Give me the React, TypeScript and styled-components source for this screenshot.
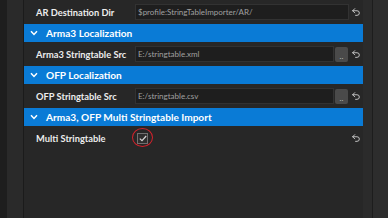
import React from 'react';
import styled, { createGlobalStyle } from 'styled-components';
import { Undo2 } from 'lucide-react';

const GlobalStyle = createGlobalStyle`
  html, body {
    margin: 0;
    padding: 0;
    background: #262626;
    font-family: Lato, "Liberation Sans", sans-serif;
  }
`;

const Root = styled.div`
  display: flex;
  height: 218px;
  width: 388px;
  overflow: hidden;
  background: #262626;
`;

const LeftGutter = styled.div`
  display: flex;
  width: 24px;
  flex-shrink: 0;
  border-right: 1px solid #1b1b1b;
  box-sizing: border-box;
`;

const GutterStrip = styled.div<{ $w: number; $bg: string }>`
  width: ${(p) => p.$w}px;
  background: ${(p) => p.$bg};
  flex-shrink: 0;
`;

const Panel = styled.div`
  display: flex;
  flex-direction: column;
  width: 339px;
  flex-shrink: 0;
  background: #272727;
`;

const RightStrip = styled.div`
  display: flex;
  flex: 1;
`;

const Row = styled.div`
  display: grid;
  grid-template-columns: 111px 1fr 12px;
  align-items: center;
  height: 24px;
  padding-right: 2px;
`;

const Label = styled.div`
  padding-left: 12px;
  font-size: 9.3px;
  font-weight: 700;
  color: #ececec;
  white-space: nowrap;
`;

const Field = styled.div`
  display: flex;
  align-items: center;
  gap: 1px;
  height: 16px;
`;

const Input = styled.div`
  flex: 1;
  height: 16px;
  box-sizing: border-box;
  background: #1e1e1e;
  border: 1px solid #323232;
  padding: 0 2px;
  font-size: 8px;
  line-height: 14px;
  color: #a0a0a0;
  white-space: nowrap;
  overflow: hidden;
`;

const BrowseButton = styled.div`
  width: 13px;
  height: 15px;
  background: #4a4a4a;
  border-radius: 2px;
  color: #bcbcbc;
  font-size: 8px;
  line-height: 18px;
  text-align: center;
  margin-right: 1px;
`;

const Reset = styled.div`
  display: flex;
  justify-content: flex-end;
  color: #cfcfcf;
`;

const Header = styled.div`
  display: flex;
  align-items: center;
  gap: 8px;
  height: 18px;
  padding-left: 6px;
  background: #0a7bd6;
  color: #ffffff;
  font-size: 10.1px;
  font-weight: 700;
  white-space: nowrap;
`;

const Chevron = styled.svg`
  width: 8px;
  height: 6px;
  flex-shrink: 0;
`;

const CheckWrap = styled.div`
  position: relative;
  width: 11px;
  height: 11px;
  margin-left: 2px;
`;

const CheckBox = styled.div`
  width: 11px;
  height: 11px;
  box-sizing: border-box;
  border: 1px solid #707070;
  background: #2e2e2e;
  display: flex;
  align-items: center;
  justify-content: center;
`;

const Annotation = styled.div`
  position: absolute;
  left: -5px;
  top: -5px;
  width: 21px;
  height: 19px;
  border: 1.5px solid #d4222c;
  border-radius: 50%;
  box-sizing: border-box;
`;

const SectionHeader: React.FC<{ title: string }> = ({ title }) => (
  <Header>
    <Chevron viewBox="0 0 8 6">
      <path d="M1 1.2 L4 4.4 L7 1.2" fill="none" stroke="#fff" strokeWidth="1.5" />
    </Chevron>
    {title}
  </Header>
);

const ResetIcon = () => (
  <Reset>
    <Undo2 size={10} strokeWidth={2.2} />
  </Reset>
);

const App: React.FC = () => {
  return (
    <Root>
      <GlobalStyle />
      <LeftGutter>
        <GutterStrip $w={7} $bg="#1e1e1e" />
        <GutterStrip $w={16} $bg="#2a2a2a" />
      </LeftGutter>
      <Panel>
        <Row>
          <Label>AR Destination Dir</Label>
          <Field>
            <Input>$profile:StringTableImporter/AR/</Input>
          </Field>
          <ResetIcon />
        </Row>
        <SectionHeader title="Arma3 Localization" />
        <Row>
          <Label>Arma3 Stringtable Src</Label>
          <Field>
            <Input>E:/stringtable.xml</Input>
            <BrowseButton>..</BrowseButton>
          </Field>
          <ResetIcon />
        </Row>
        <SectionHeader title="OFP Localization" />
        <Row>
          <Label>OFP Stringtable Src</Label>
          <Field>
            <Input>E:/stringtable.csv</Input>
            <BrowseButton>..</BrowseButton>
          </Field>
          <ResetIcon />
        </Row>
        <SectionHeader title="Arma3, OFP Multi Stringtable Import" />
        <Row>
          <Label>Multi Stringtable</Label>
          <Field>
            <CheckWrap>
              <CheckBox>
                <svg width="8" height="7" viewBox="0 0 8 7">
                  <path d="M0.8 3.6 L3 5.6 L7.2 1" fill="none" stroke="#d6d6d6" strokeWidth="1.2" />
                </svg>
              </CheckBox>
              <Annotation />
            </CheckWrap>
          </Field>
          <ResetIcon />
        </Row>
      </Panel>
      <RightStrip>
        <GutterStrip $w={9} $bg="#2b2b2b" />
        <GutterStrip $w={1} $bg="#1d1d1d" />
        <GutterStrip $w={16} $bg="#2d2d2d" />
      </RightStrip>
    </Root>
  );
};

export default App;
